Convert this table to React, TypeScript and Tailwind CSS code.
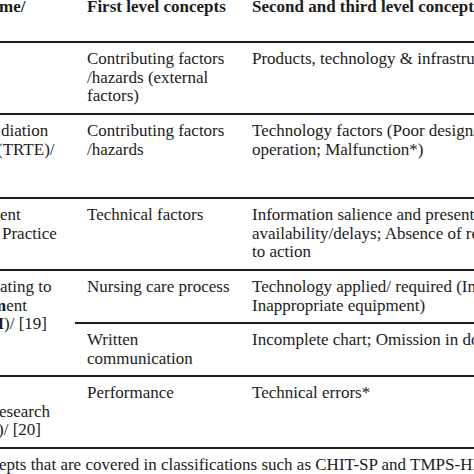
type Frag = { readonly text: string; readonly cls?: string }

interface RowProps {
  readonly height: string
  readonly left: ReadonlyArray<Frag>
  readonly mid: ReadonlyArray<string>
  readonly right: ReadonlyArray<string>
}

const ROWS: ReadonlyArray<RowProps> = [
  {
    height: "h-[72px]",
    left: [],
    mid: ["Contributing factors", "/hazards (external", "factors)"],
    right: ["Products, technology & infrastructure"],
  },
  {
    height: "h-[84px]",
    left: [
      { text: "diation", cls: "ml-[1px]" },
      { text: "(TRTE)/", cls: "-ml-[3px]" },
    ],
    mid: ["Contributing factors", "/hazards"],
    right: ["Technology factors (Poor design/", "operation; Malfunction*)"],
  },
  {
    height: "h-[72px]",
    left: [
      { text: "ent", cls: "ml-0" },
      { text: "Practice", cls: "ml-[2px]" },
    ],
    mid: ["Technical factors"],
    right: [
      "Information salience and presentation/",
      "availability/delays; Absence of response",
      "to action",
    ],
  },
]

const LAST: RowProps = {
  height: "h-[72px]",
  left: [
    { text: "" },
    { text: "esearch", cls: "-ml-[1px]" },
    { text: ")/ [20]", cls: "-ml-[2px]" },
  ],
  mid: ["Performance"],
  right: ["Technical errors*"],
}

function Lines({ lines }: { readonly lines: ReadonlyArray<string> }) {
  return (
    <>
      {lines.map((l, i) => (
        <div key={i} className="h-[18.7px] whitespace-nowrap">
          {l}
        </div>
      ))}
    </>
  )
}

function LeftCell({ frags }: { readonly frags: ReadonlyArray<Frag> }) {
  return (
    <div className="pt-[7px]">
      {frags.map((f, i) => (
        <div key={i} className={`h-[18.7px] whitespace-nowrap ${f.cls ?? ""}`}>
          {f.text}
        </div>
      ))}
    </div>
  )
}

function Row({ height, left, mid, right }: RowProps) {
  return (
    <div className={`grid grid-cols-[75px_165px_1fr] border-t-2 border-[#1e1e1e] ${height}`}>
      <LeftCell frags={left} />
      <div className="pl-[12px] pt-[7px]">
        <Lines lines={mid} />
      </div>
      <div className="pl-[12px] pt-[7px]">
        <Lines lines={right} />
      </div>
    </div>
  )
}

export default function App() {
  return (
    <div className="h-[474px] w-[474px] overflow-hidden bg-white font-['Liberation_Serif',serif] text-[17px] leading-[18.7px] text-[#1c1c1c]">
      {/* cabecera */}
      <div className="grid h-[41px] grid-cols-[75px_165px_1fr] font-bold leading-[14px]">
        <div className="-ml-[1px] whitespace-nowrap">me/</div>
        <div className="whitespace-nowrap pl-[12px]">First level concepts</div>
        <div className="whitespace-nowrap pl-[12px]">Second and third level concepts</div>
      </div>

      {ROWS.map((r, i) => (
        <Row key={i} {...r} />
      ))}

      {/* fila con dos subfilas */}
      <div className="grid h-[106px] grid-cols-[75px_1fr] border-t-2 border-[#1e1e1e]">
        <div className="pt-[7px]">
          <div className="h-[18.7px] whitespace-nowrap">ating to</div>
          <div className="-ml-[8px] h-[18.7px] whitespace-nowrap font-semibold">
            m<span className="font-normal">ent</span>
          </div>
          <div className="-ml-[12px] h-[18.7px] whitespace-nowrap">
            <span className="font-bold">M</span>)/ [19]
          </div>
        </div>
        <div className="flex flex-col">
          <div className="grid h-[51px] grid-cols-[165px_1fr]">
            <div className="pl-[12px] pt-[7px]">
              <Lines lines={["Nursing care process"]} />
            </div>
            <div className="pl-[12px] pt-[7px]">
              <Lines lines={["Technology applied/ required (Improper use;", "Inappropriate equipment)"]} />
            </div>
          </div>
          <div className="grid flex-1 grid-cols-[165px_1fr] border-t-2 border-[#1e1e1e]">
            <div className="pl-[12px] pt-[7px]">
              <Lines lines={["Written", "communication"]} />
            </div>
            <div className="pl-[12px] pt-[7px]">
              <Lines lines={["Incomplete chart; Omission in documentation"]} />
            </div>
          </div>
        </div>
      </div>

      <Row {...LAST} />

      <div className="-ml-[1px] whitespace-nowrap border-t-2 border-[#1e1e1e] pt-[7px]">
        epts that are covered in classifications such as CHIT-SP and TMPS-HIT
      </div>
    </div>
  )
}
